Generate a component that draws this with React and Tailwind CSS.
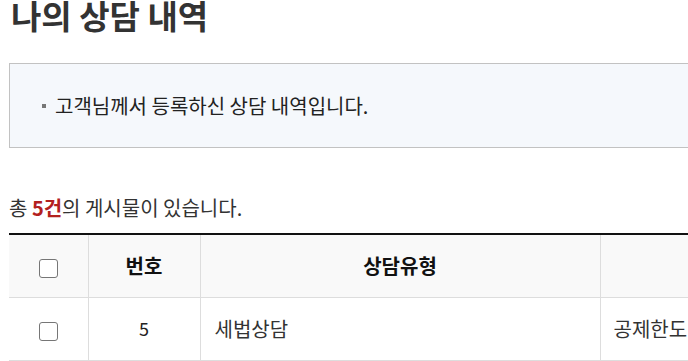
import React from "react";

const rows = [{ no: 5, type: "세법상담", title: "공제한도" }];

const Check = () => (
  <span className="inline-block w-[19px] h-[19px] rounded-[3px] border border-[#767676] bg-white align-middle" />
);

export default function App() {
  return (
    <div
      className="w-[688px] h-[361px] overflow-hidden bg-white text-[#222]"
      style={{ fontFamily: '"Noto Sans CJK KR", "Noto Sans", sans-serif' }}
    >
      <div className="w-[1100px] pl-[9px]">
        {/* page title */}
        <h2 className="-mt-[5px] pl-[2px] text-[33px] font-bold leading-[40px] text-[#333]">
          나의 상담 내역
        </h2>

        {/* info box */}
        <div className="mt-[28px] h-[85px] border border-[#c2c2c2] bg-[#f5f8fc] flex items-center pl-[32px]">
          <span className="w-[4px] h-[4px] bg-[#777] mr-[9px]" />
          <p className="text-[20px] text-[#222]">고객님께서 등록하신 상담 내역입니다.</p>
        </div>

        {/* count */}
        <p className="mt-[48px] text-[20px] leading-[24px] text-[#333]">
          총 <b className="text-[#b3211e] font-bold">5건</b>의 게시물이 있습니다.
        </p>

        {/* table */}
        <table className="mt-[13px] w-full border-collapse border-t-2 border-t-[#111] text-[20px]">
          <colgroup>
            <col className="w-[79px]" />
            <col className="w-[112px]" />
            <col className="w-[400px]" />
            <col />
          </colgroup>
          <thead>
            <tr className="h-[63px] bg-[#f9f9f9] border-b border-[#ddd]">
              <th className="text-center border-r border-[#ddd]"><Check /></th>
              <th className="text-center font-bold text-[#111] border-r border-[#ddd]">번호</th>
              <th className="text-center font-bold text-[#111] border-r border-[#ddd]">상담유형</th>
              <th className="text-center font-bold text-[#111]">제목</th>
            </tr>
          </thead>
          <tbody>
            {rows.map((r) => (
              <tr key={r.no} className="h-[63px] border-b border-[#ddd]">
                <td className="text-center border-r border-[#ddd]"><Check /></td>
                <td className="text-center text-[18px] text-[#222] border-r border-[#ddd]">{r.no}</td>
                <td className="pl-[14px] text-[#333] border-r border-[#ddd]">{r.type}</td>
                <td className="pl-[13px] text-[#333]">{r.title}</td>
              </tr>
            ))}
          </tbody>
        </table>
      </div>
    </div>
  );
}
